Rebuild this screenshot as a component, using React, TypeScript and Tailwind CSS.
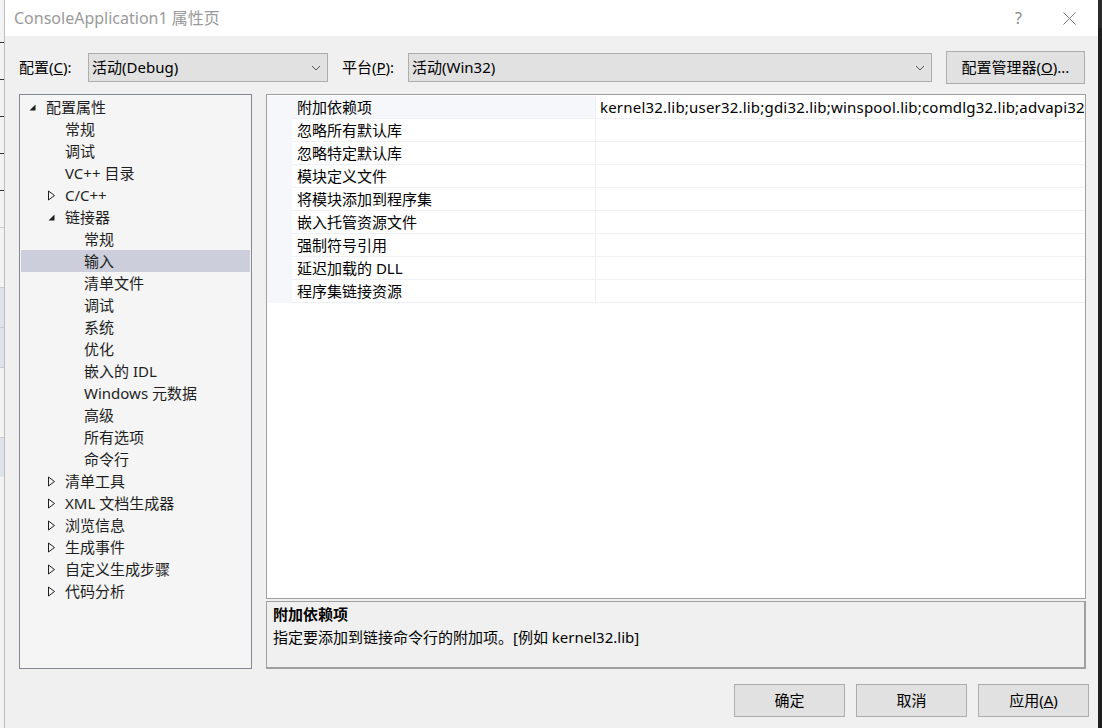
import React from 'react';

const font = { fontFamily: '"Noto Sans", "Noto Sans CJK SC", sans-serif' };

type Node = { label: string; level: number; tri?: 'open' | 'closed'; selected?: boolean };

const tree: Node[] = [
  { label: '配置属性', level: 0, tri: 'open' },
  { label: '常规', level: 1 },
  { label: '调试', level: 1 },
  { label: 'VC++ 目录', level: 1 },
  { label: 'C/C++', level: 1, tri: 'closed' },
  { label: '链接器', level: 1, tri: 'open' },
  { label: '常规', level: 2 },
  { label: '输入', level: 2, selected: true },
  { label: '清单文件', level: 2 },
  { label: '调试', level: 2 },
  { label: '系统', level: 2 },
  { label: '优化', level: 2 },
  { label: '嵌入的 IDL', level: 2 },
  { label: 'Windows 元数据', level: 2 },
  { label: '高级', level: 2 },
  { label: '所有选项', level: 2 },
  { label: '命令行', level: 2 },
  { label: '清单工具', level: 1, tri: 'closed' },
  { label: 'XML 文档生成器', level: 1, tri: 'closed' },
  { label: '浏览信息', level: 1, tri: 'closed' },
  { label: '生成事件', level: 1, tri: 'closed' },
  { label: '自定义生成步骤', level: 1, tri: 'closed' },
  { label: '代码分析', level: 1, tri: 'closed' },
];

const props = [
  '附加依赖项',
  '忽略所有默认库',
  '忽略特定默认库',
  '模块定义文件',
  '将模块添加到程序集',
  '嵌入托管资源文件',
  '强制符号引用',
  '延迟加载的 DLL',
  '程序集链接资源',
];

function Tri({ kind }: { kind: 'open' | 'closed' }) {
  if (kind === 'open')
    return (
      <svg width="9" height="9" viewBox="0 0 9 9">
        <path d="M7.5 1.5 L7.5 7.5 L1.5 7.5 Z" fill="#1e1e1e" />
      </svg>
    );
  return (
    <svg width="9" height="11" viewBox="0 0 9 11">
      <path d="M1.5 1 L7.5 5.5 L1.5 10 Z" fill="none" stroke="#1e1e1e" strokeWidth="1" />
    </svg>
  );
}

function Chevron() {
  return (
    <svg width="10" height="6" viewBox="0 0 10 6">
      <path d="M1 1 L5 5 L9 1" fill="none" stroke="#555" strokeWidth="1" />
    </svg>
  );
}

function Combo({ value, w }: { value: string; w: string }) {
  return (
    <div className={`${w} shrink-0 h-[29px] bg-[#e1e1e1] border border-[#adadad] flex items-center justify-between pl-[3px] pr-[6px] text-[15px] text-black`}>
      <span>{value}</span>
      <Chevron />
    </div>
  );
}

function Btn({ children }: { children: React.ReactNode }) {
  return (
    <div className="w-[111px] h-[33px] shrink-0 bg-[#e1e1e1] border border-[#adadad] flex items-center justify-center text-[15px] text-black">
      {children}
    </div>
  );
}

export default function App() {
  return (
    <div className="w-[1102px] h-[728px] flex overflow-hidden bg-[#f0f0f0]" style={font}>
      {/* sliver of the window behind */}
      <div className="w-[5px] shrink-0 flex flex-col bg-[#f3f3f3] border-r border-[#bdbdbd]">
        <div className="h-[42px]" />
        {[0, 1, 2, 3, 4].map((i) => (
          <div key={i} className="h-[37px] border-t border-[#333]" />
        ))}
        <div className="h-[60px] border-t border-[#ccc]" />
        <div className="h-[40px] bg-[#dde3ea] border-t border-[#ccc]" />
        <div className="h-[40px] bg-[#dde3ea] border-t border-[#ccc]" />
        <div className="h-[70px] border-t border-[#ccc]" />
        <div className="h-[40px] bg-[#dde3ea] border-t border-[#ccc]" />
        <div className="flex-1" />
      </div>

      <div className="w-[1093px] shrink-0 min-w-0 flex flex-col">
        {/* title bar */}
        <div className="h-[36px] bg-white flex items-center justify-between pl-[9px] pr-[22px]">
          <span className="text-[16px] text-[#9a9a9a]">ConsoleApplication1 属性页</span>
          <div className="flex items-center gap-[41px] text-[#8a8a8a]">
            <span className="text-[16px]">?</span>
            <svg width="13" height="13" viewBox="0 0 13 13">
              <path d="M0.5 0.5 L12.5 12.5 M12.5 0.5 L0.5 12.5" stroke="#777" strokeWidth="1" />
            </svg>
          </div>
        </div>

        {/* config row */}
        <div className="flex items-center h-[58px] pt-[15px] pb-[10px] pl-[14px] pr-[13px]">
          <span className="text-[15px] text-black w-[69px] shrink-0">
            配置(<span className="underline">C</span>):
          </span>
          <Combo value="活动(Debug)" w="w-[240px]" />
          <span className="text-[15px] text-black ml-[14px] w-[66px] shrink-0">
            平台(<span className="underline">P</span>):
          </span>
          <Combo value="活动(Win32)" w="w-[524px]" />
          <div className="ml-[14px] w-[139px] shrink-0 h-[33px] bg-[#e1e1e1] border border-[#adadad] flex items-center justify-center text-[15px] text-black">
            配置管理器(<span className="underline">O</span>)...
          </div>
        </div>

        {/* main */}
        <div className="flex pl-[14px] pr-[13px] gap-[14px] h-[575px]">
          <div className="w-[233px] shrink-0 bg-[#f5f5f5] border border-[#828790] pt-[1px] px-[1px] flex flex-col">
            {tree.map((n, i) => (
              <div
                key={i}
                className={`h-[22px] flex items-center text-[15px] text-[#1e1e1e] ${n.selected ? 'bg-[#cccedb]' : ''}`}
                style={{ paddingLeft: 7 + n.level * 19 }}
              >
                <span className="w-[18px] flex items-center justify-start">
                  {n.tri ? <Tri kind={n.tri} /> : null}
                </span>
                <span>{n.label}</span>
              </div>
            ))}
          </div>

          <div className="w-[820px] shrink-0 min-w-0 flex flex-col gap-[2px]">
            <div className="h-[505px] bg-white border border-[#a0a0a0] flex flex-col pt-[1px] overflow-hidden">
              {props.map((p, i) => (
                <div key={i} className="h-[23px] flex text-[15px] text-black">
                  <div className="w-[25px] shrink-0 bg-[#f5f7fa]" />
                  <div className={`w-[304px] shrink-0 flex items-center pl-[5px] border-b border-r border-[#eef0f4] ${i === 0 ? 'bg-[#f5f7fa]' : ''}`}>
                    {p}
                  </div>
                  <div className="flex-1 min-w-0 flex items-center pl-[4px] border-b border-[#eef0f4] overflow-hidden whitespace-nowrap tracking-[0.2px]">
                    {i === 0 ? 'kernel32.lib;user32.lib;gdi32.lib;winspool.lib;comdlg32.lib;advapi32.lib;shell32.lib' : ''}
                  </div>
                </div>
              ))}
            </div>
            <div className="h-[68px] bg-[#f0f0f0] border-2 border-[#a0a0a0] border-l-[1px] border-t-[1px] px-[6px] pt-[1px] flex flex-col">
              <div className="text-[15px] font-bold text-black h-[23px] flex items-center">附加依赖项</div>
              <div className="text-[15px] text-black h-[22px] flex items-center">指定要添加到链接命令行的附加项。[例如 kernel32.lib]</div>
            </div>
          </div>
        </div>

        {/* buttons */}
        <div className="flex justify-end gap-[11px] pr-[9px] pt-[15px]">
          <Btn>确定</Btn>
          <Btn>取消</Btn>
          <Btn>
            应用(<span className="underline">A</span>)
          </Btn>
        </div>
      </div>

      <div className="w-[4px] shrink-0 flex flex-col bg-[#1f1f1f]">
        <div className="h-[28px] bg-[#2b2b2b]" />
      </div>
    </div>
  );
}
